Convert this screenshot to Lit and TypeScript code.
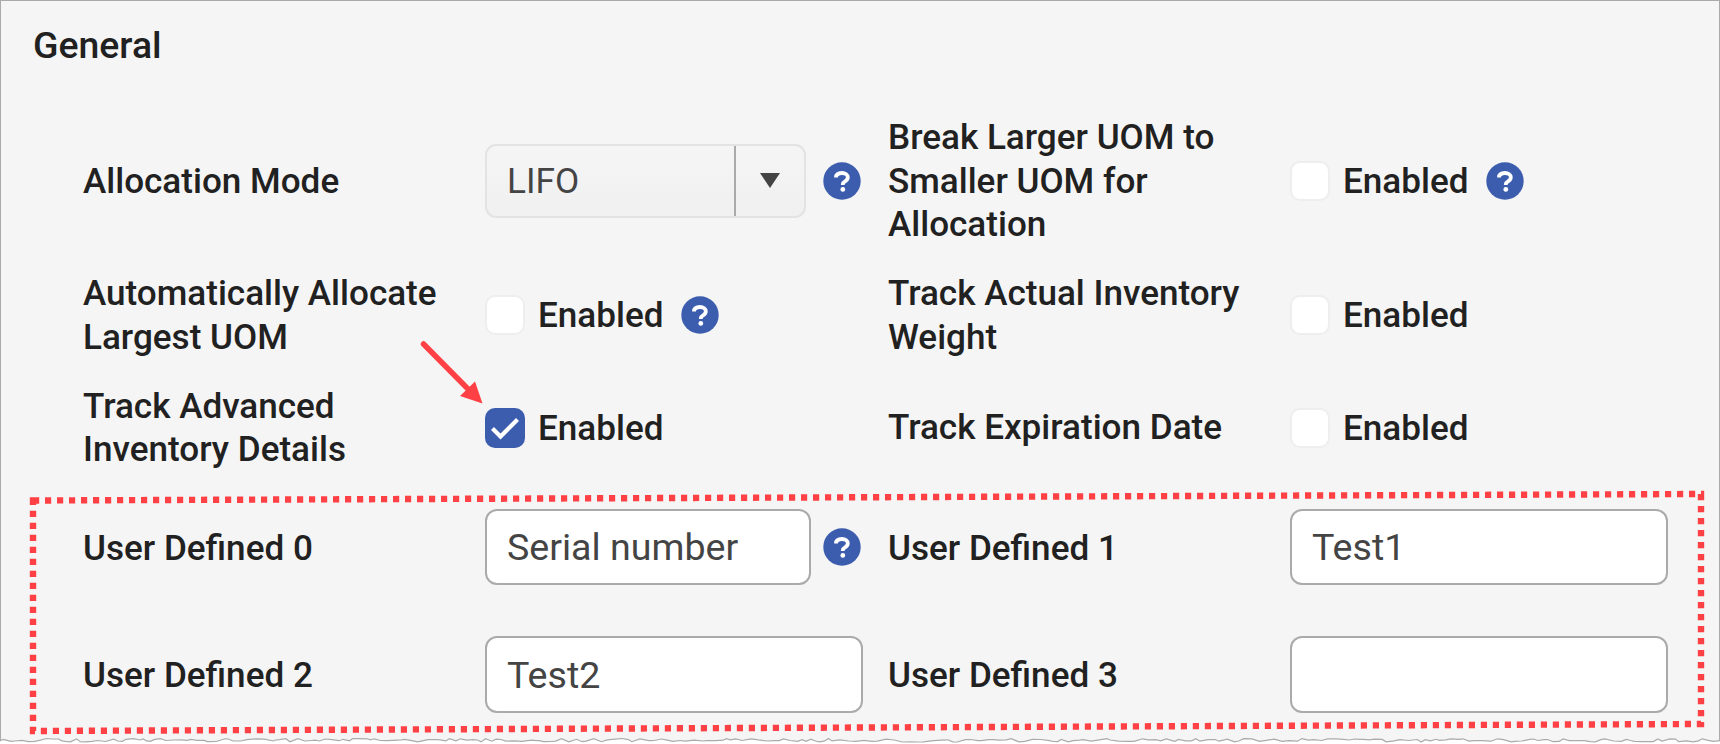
import { LitElement, html, css, svg } from "lit";
import { customElement } from "lit/decorators.js";

const help = html`<svg class="help" viewBox="0 0 38 38" aria-hidden="true">
  <circle cx="19" cy="19" r="18.7" fill="#3c5cae"></circle>
  <path d="M13 15.6c0-3.1 2.6-4.6 6-4.6 3.4 0 5.8 1.7 5.8 4.3 0 2-1 3-2.7 4-1.6.9-2.3 1.5-2.3 3v.8" fill="none" stroke="#fff" stroke-width="3.8"></path>
  <circle cx="19.8" cy="27.4" r="2.4" fill="#fff"></circle>
</svg>`;

function tornPath(): string {
  let seed = 17;
  const rnd = () => {
    seed = (seed * 16807) % 2147483647;
    return seed / 2147483647;
  };
  let d = "M0 4";
  for (let x = 0; x < 1720; ) {
    x += 3 + rnd() * 6;
    d += ` L${x.toFixed(1)} ${(1.5 + rnd() * 3.5).toFixed(1)}`;
  }
  return d;
}

@customElement("app-root")
export class AppRoot extends LitElement {
  static styles = css`
    :host {
      display: block;
      width: 1720px;
      height: 744px;
      background: #fff;
      font-family: Roboto, "Liberation Sans", sans-serif;
      color: #212121;
      overflow: hidden;
    }
    .panel {
      position: relative;
      box-sizing: border-box;
      height: 741px;
      background: #f5f5f5;
      border: solid #aaa;
      border-width: 1.5px 1.5px 0 1.5px;
      padding: 22px 0 0 32px;
    }
    h2 {
      margin: 0;
      font-size: 37.4px;
      font-weight: 500;
      line-height: 44px;
    }
    .top {
      display: grid;
      grid-template-columns: 402px 403px 402px 1fr;
      row-gap: 25px;
      margin: 49px 0 0 50px;
      align-items: center;
    }
    .bottom {
      display: grid;
      grid-template-columns: 402px 403px 402px 379px;
      row-gap: 51px;
      margin: 37px 0 0 50px;
      align-items: center;
    }
    .bottom .label {
      padding-top: 3px;
    }
    .label {
      font-size: 35.1px;
      font-weight: 500;
      line-height: 43.7px;
      white-space: nowrap;
    }
    .ctl {
      display: flex;
      align-items: center;
    }
    .ctl.up {
      padding-bottom: 2px;
    }
    .select {
      box-sizing: border-box;
      display: flex;
      width: 321px;
      height: 74px;
      border: 2px solid #e3e3e3;
      border-radius: 11px;
      background: linear-gradient(#f5f5f5, #f0f0f0);
      color: #444;
      font-size: 35.2px;
      line-height: 70px;
    }
    .select .val {
      flex: 1;
      padding-left: 20px;
      border-right: 2px solid #aaa;
    }
    .select .arrow {
      width: 68px;
      display: flex;
      align-items: center;
      justify-content: center;
    }
    .tri {
      width: 20px;
      height: 15px;
    }
    .help {
      width: 38px;
      height: 38px;
      flex: none;
    }
    .select + .help {
      margin-left: 17px;
    }
    .box {
      box-sizing: border-box;
      width: 40px;
      height: 40px;
      flex: none;
      background: #fff;
      border: 2px solid #eeeeee;
      border-radius: 10px;
      margin-right: 13px;
    }
    .box.on {
      background: #3c5cae;
      border-color: #3c5cae;
      display: flex;
      align-items: center;
      justify-content: center;
    }
    .box svg {
      width: 30px;
      height: 24px;
    }
    .en {
      font-size: 35.1px;
      font-weight: 500;
      line-height: 44px;
    }
    .en + .help {
      margin-left: 18px;
    }
    .input {
      box-sizing: border-box;
      height: 76px;
      background: #fff;
      border: 2px solid #aaa;
      border-radius: 12px;
      padding-left: 20px;
      color: #444;
      font-size: 37.6px;
      line-height: 73px;
    }
    .input.tall {
      height: 77px;
      line-height: 75px;
    }
    .w326 { width: 326px; }
    .w377 { width: 378px; }
    .help.after { margin-left: 12px; }
    .overlay {
      position: absolute;
      left: -1.5px;
      top: -1.5px;
      width: 1720px;
      height: 744px;
      pointer-events: none;
    }
    .torn {
      display: block;
      position: relative;
      margin-top: -4px;
    }
  `;

  private row(label: unknown) {
    return html`<div class="label">${label}</div>`;
  }

  render() {
    const box = html`<span class="box"></span><span class="en">Enabled</span>`;
    return html`<div class="panel">
      <h2>General</h2>
      <div class="top">
        ${this.row("Allocation Mode")}
        <div class="ctl up">
          <div class="select">
            <div class="val">LIFO</div>
            <div class="arrow">
              <svg class="tri" viewBox="0 0 20 15"><path d="M0 0H20L10 15Z" fill="#444"></path></svg>
            </div>
          </div>
          ${help}
        </div>
        ${this.row(html`Break Larger UOM to<br />Smaller UOM for<br />Allocation`)}
        <div class="ctl up">${box}${help}</div>

        ${this.row(html`Automatically Allocate<br />Largest UOM`)}
        <div class="ctl up">${box}${help}</div>
        ${this.row(html`Track Actual Inventory<br />Weight`)}
        <div class="ctl up">${box}</div>

        ${this.row(html`Track Advanced<br />Inventory Details`)}
        <div class="ctl">
          <span class="box on">
            <svg viewBox="0 0 30 24"><path d="M2.5 12.5l8 8L27.5 3.5" fill="none" stroke="#fff" stroke-width="4.2"></path></svg>
          </span>
          <span class="en">Enabled</span>
        </div>
        ${this.row("Track Expiration Date")}
        <div class="ctl">${box}</div>
      </div>
      <div class="bottom">
        ${this.row("User Defined 0")}
        <div class="ctl">
          <div class="input w326">Serial number</div>
          <span class="help after">${help}</span>
        </div>
        ${this.row("User Defined 1")}
        <div class="ctl"><div class="input w377">Test1</div></div>
        ${this.row("User Defined 2")}
        <div class="ctl"><div class="input tall w377">Test2</div></div>
        ${this.row("User Defined 3")}
        <div class="ctl"><div class="input tall w377"></div></div>
      </div>
      <svg class="overlay" viewBox="0 0 1720 744">
        ${svg`
          <path d="M33 500.5L1701 494V724L33 731Z" fill="none" stroke="#ff4044" stroke-width="6.4" stroke-dasharray="6.2 5.8"></path>
          <path d="M423.5 344L468 389" fill="none" stroke="#ff4044" stroke-width="5.5" stroke-linecap="round"></path>
          <path d="M482.5 403.5L460 396L475 381.5Z" fill="#ff4044"></path>
        `}
      </svg>
    </div>
    <svg class="torn" width="1720" height="8" viewBox="0 0 1720 8">
      <path d="${tornPath()} L1720 8 L0 8Z" fill="#fff"></path>
      <path d="${tornPath()}" fill="none" stroke="#aaa" stroke-width="1.2"></path>
    </svg>`;
  }
}
